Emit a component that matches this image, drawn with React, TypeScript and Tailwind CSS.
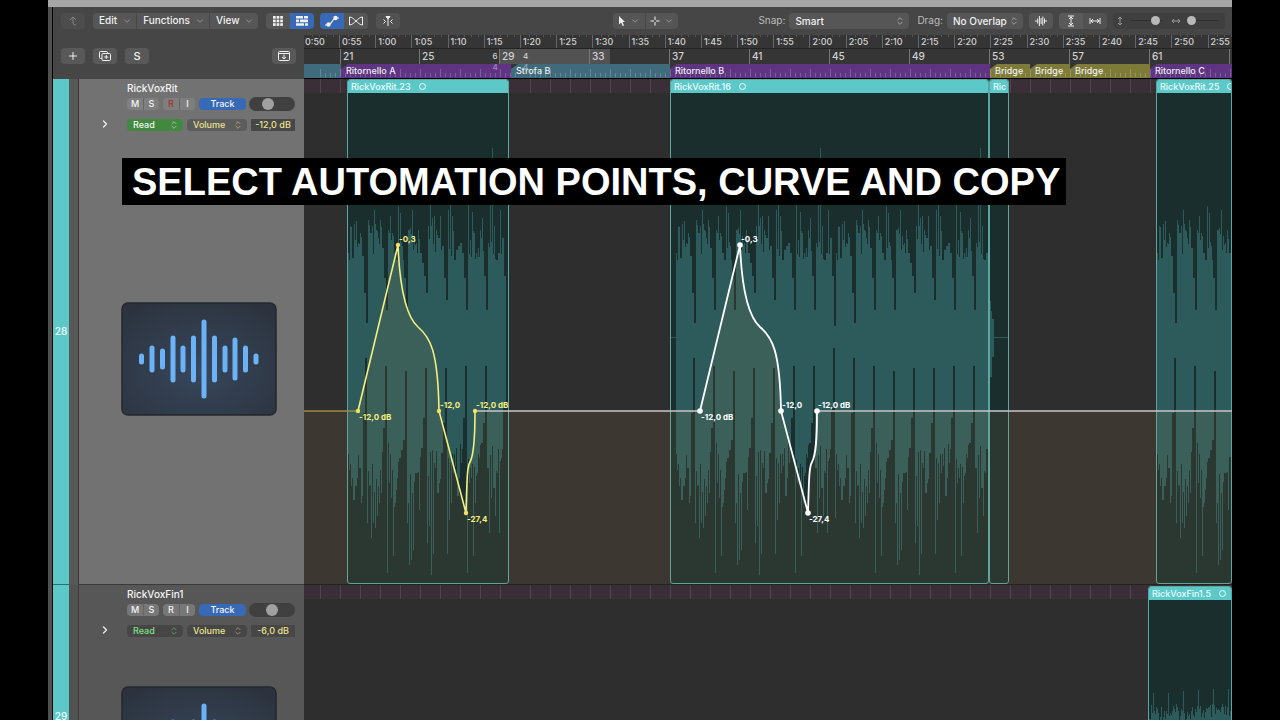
import React from "react";
import { ChevronDown, ChevronRight, ChevronsUpDown, Plus } from "lucide-react";

type Segment = { label: string; size: number };
type Track = {
    number: number;
    name: string;
    selected: boolean;
    pan: number;
    level: string;
}

const LANE_WIDTH = 928;

// share of the visible timeline
function share(size: number) {
    return { width: size / LANE_WIDTH * 100 + "%" };
}

const times: Segment[] = [{ label: "0:50", size: 35 }];
for (let s = 55; s <= 175; s += 5) {
    times.push({ label: Math.floor(s / 60) + ":" + String(s % 60).padStart(2, "0"), size: s == 175 ? 24 : 36.2 });
}

const bars: Segment[] = [
    { label: "", size: 36 },
    { label: "21", size: 79 },
    { label: "25", size: 80 },
    { label: "29", size: 90 },
    { label: "33", size: 80 },
    { label: "37", size: 80 },
    { label: "41", size: 80 },
    { label: "45", size: 80 },
    { label: "49", size: 80 },
    { label: "53", size: 80 },
    { label: "57", size: 80 },
    { label: "61", size: 80 },
    { label: "", size: 3 },
];

const markers = [
    { label: "", size: 37, color: "bg-[#406b7c]" },
    { label: "Ritornello A", size: 170, color: "bg-[#5f3483]" },
    { label: "Strofa B", size: 159, color: "bg-[#406b7c]" },
    { label: "Ritornello B", size: 320, color: "bg-[#5f3483]" },
    { label: "Bridge", size: 40, color: "bg-[#7e7b38]" },
    { label: "Bridge", size: 40, color: "bg-[#7e7b38]" },
    { label: "Bridge", size: 80, color: "bg-[#7e7b38]" },
    { label: "Ritornello C", size: 82, color: "bg-[#5f3483]" },
];

const tracks: Track[] = [
    { number: 28, name: "RickVoxRit", selected: true, pan: 37, level: "-12,0 dB" },
    { number: 29, name: "RickVoxFin1", selected: false, pan: 50, level: "-6,0 dB" },
];

// bar lines, one 6/4 bar sits between 195 and 225
const barLines: number[] = [];
for (let x = 16; x <= 196; x += 20) barLines.push(x);
for (let x = 226; x < LANE_WIDTH; x += 20) barLines.push(x);

// peaks of an 8 bar phrase, ten values per bar, in pixels from the centre line
const upper = [
    85, 112, 80, 114, 117, 95, 105, 82, 45, 15,
    118, 105, 112, 128, 108, 100, 118, 90, 60, 28,
    108, 122, 105, 85, 78, 132, 125, 92, 60, 28,
    108, 110, 128, 102, 95, 108, 85, 75, 62, 45,
    112, 146, 120, 122, 108, 100, 122, 92, 60, 38,
    128, 150, 122, 78, 88, 92, 95, 85, 60, 28,
    138, 98, 126, 105, 85, 90, 108, 120, 62, 28,
    95, 146, 190, 112, 78, 85, 128, 100, 62, 12,
];
const lower = [
    180, 132, 148, 162, 148, 140, 130, 165, 75, 20,
    185, 148, 200, 185, 190, 178, 165, 155, 90, 28,
    235, 145, 160, 218, 165, 140, 120, 112, 102, 33,
    185, 227, 222, 212, 135, 135, 172, 110, 80, 30,
    205, 188, 237, 216, 130, 155, 145, 115, 85, 30,
    216, 182, 165, 135, 128, 158, 140, 125, 80, 28,
    235, 145, 140, 218, 165, 135, 120, 105, 85, 28,
    130, 195, 160, 150, 178, 135, 195, 120, 70, 10,
];

function jitter(n: number) {
    const v = Math.sin(n * 12.9898) * 43758.5453;
    return v - Math.floor(v);
}

function wavePath(start: number, width: number, center: number) {
    let top = "";
    let bottom = "";
    for (let x = start; x < width; x++) {
        const i = x - start;
        const slot = Math.floor(i / 2) % 80;
        let up = upper[slot];
        let down = lower[slot];
        if (i % 2 == 1 && slot % 10 < 8) {
            up = Math.min(up, 78 + jitter(slot) * 36);
            down = Math.min(down, 105 + jitter(slot + 7) * 65);
        }
        top += `V${Math.round(center - up)}H${x + 1}`;
        bottom = `H${x}V${Math.round(center + down)}` + bottom;
    }
    return `M${start} ${center}${top}V${center}${bottom.replace(/^H\d+/, "")}Z`;
}

// second track has a quieter take, only its top edge is in view
function quietPath(width: number) {
    let d = "M0 500V212";
    for (let x = 1; x < width; x++) {
        const y = x % 15 == 4 ? 88 + jitter(x) * 14 : 104 + jitter(x) * 16;
        d += `V${Math.round(y)}H${x + 1}`;
    }
    return d + "V500Z";
}

function Stepper() {
    return <ChevronsUpDown className="pointer-events-none absolute right-1 size-2.5 opacity-60" strokeWidth={2} />;
}

function ToolButton({ label, className = "", children }: { label: string; className?: string; children: React.ReactNode }) {
    return (
        <button aria-label={label} className={"flex h-4 w-6 shrink-0 items-center justify-center " + className}>
            {children}
        </button>
    )
}

function MenuButton({ children }: { children: string }) {
    return (
        <button className="flex h-4 items-center gap-[5px] bg-[#565656] pr-1 pl-1.5 first:rounded-l last:rounded-r">
            {children}
            <ChevronDown className="size-2.5 text-[#a0a0a0]" />
        </button>
    )
}

function Toolbar() {
    return (
        <header className="flex h-7 shrink-0 items-center bg-[#464646] pr-[7px] pb-px pl-2 text-[10px] font-medium text-[#f0f0f0]">
            <ToolButton label="Up" className="rounded bg-[#4d4d4d] text-[#828282]">
                <svg className="size-3" viewBox="0 0 12 12" fill="none" stroke="currentColor" strokeWidth="1">
                    <path d="M3 5l3-3 3 3M6 2v6q0 2 3 2" />
                </svg>
            </ToolButton>
            <nav className="ml-2 flex gap-px">
                <MenuButton>Edit</MenuButton>
                <MenuButton>Functions</MenuButton>
                <MenuButton>View</MenuButton>
            </nav>
            <div className="ml-2 flex">
                <ToolButton label="Grid view" className="rounded-l bg-[#565656]">
                    <svg className="size-2.5" viewBox="0 0 10 10" fill="currentColor">
                        {[0, 3.6, 7.2].map(y => [0, 3.6, 7.2].map(x => <rect key={x + "-" + y} x={x} y={y} width="2.7" height="2.7" />))}
                    </svg>
                </ToolButton>
                <ToolButton label="Track view" className="rounded-r bg-[#3769b6]">
                    <svg className="h-2.5 w-3" viewBox="0 0 12 10" fill="currentColor">
                        <path d="M0 0h7v2.5H0zM8 0h4v2.5H8zM0 3.6h3v2.6H0zM4 3.6h8v2.6H4zM0 7.3h8v2.5H0zM9 7.3h3v2.5H9z" />
                    </svg>
                </ToolButton>
            </div>
            <div className="ml-1.5 flex">
                <ToolButton label="Show automation" className="rounded-l bg-[#3769b6]">
                    <svg className="h-3 w-4" viewBox="0 0 16 12" fill="none" stroke="currentColor" strokeWidth="1.2">
                        <path d="M1 10h3C8 10 8 3 12 3h3" />
                        <circle cx="4.5" cy="9.5" r="1.6" fill="currentColor" />
                        <circle cx="11.5" cy="3" r="1.6" fill="currentColor" />
                    </svg>
                </ToolButton>
                <ToolButton label="Flex" className="rounded-r bg-[#565656]">
                    <svg className="h-2.5 w-4" viewBox="0 0 16 10" fill="none" stroke="currentColor" strokeWidth="1">
                        <path d="M1.500 9V1C6 1 10 9 14.500 9V1C10 1 6 9 1.500 9z" />
                    </svg>
                </ToolButton>
            </div>
            <ToolButton label="Catch playhead" className="ml-2 rounded bg-[#525252]">
                <svg className="size-3" viewBox="0 0 12 12" fill="none" stroke="currentColor" strokeWidth="1">
                    <path d="M4 1.500h4L6 4z" fill="currentColor" />
                    <path d="M6 3v8M1.500 4.500l2 2-2 2M10.500 4.500l-2 2 2 2" />
                </svg>
            </ToolButton>

            <div className="mr-20 ml-auto flex gap-px">
                <button aria-label="Pointer tool" className="flex h-4 w-8 items-center justify-center gap-1 rounded-l bg-[#555]">
                    <svg className="h-3 w-2" viewBox="0 0 8 12" fill="currentColor">
                        <path d="M1 1l6 6H4.600l1.400 3.400-1.400.6L3.200 7.600 1 9.500z" />
                    </svg>
                    <ChevronDown className="size-2.5 text-[#a0a0a0]" />
                </button>
                <button aria-label="Marquee tool" className="flex h-4 w-8 items-center justify-center gap-1 rounded-r bg-[#555]">
                    <svg className="size-2.5" viewBox="0 0 10 10" stroke="currentColor">
                        <path d="M5 .500v3.500M5 6v3.500M.500 5H4M6 5h3.500" />
                    </svg>
                    <ChevronDown className="size-2.5 text-[#a0a0a0]" />
                </button>
            </div>

            <label htmlFor="snap" className="mr-1 font-normal text-[#bdbdbd]">Snap:</label>
            <div className="relative flex items-center">
                <select id="snap" className="h-4 w-[120px] appearance-none rounded bg-[#565656] px-1.5 leading-4"><option>Smart</option></select>
                <Stepper />
            </div>
            <label htmlFor="drag" className="mr-1 ml-2 font-normal text-[#bdbdbd]">Drag:</label>
            <div className="relative flex items-center">
                <select id="drag" className="h-4 w-[76px] appearance-none rounded bg-[#565656] px-1.5 leading-4"><option>No Overlap</option></select>
                <Stepper />
            </div>
            <ToolButton label="Waveform zoom" className="ml-1.5 rounded bg-[#565656]">
                <svg className="size-3" viewBox="0 0 12 12" stroke="currentColor" strokeWidth="1">
                    <path d="M1 5v2M2.700 3.500v5M4.400 1v10M6.100 3v6M7.800 1.500v9M9.500 3.500v5M11 5v2" />
                </svg>
            </ToolButton>
            <div className="ml-1.5 flex">
                <ToolButton label="Vertical auto zoom" className="rounded-l bg-[#5a5a5a]">
                    <svg className="size-3" viewBox="0 0 12 12" fill="none" stroke="currentColor" strokeWidth="1">
                        <path d="M3 1h6M3 11h6M6 1.500v9M4 4l2-2 2 2M4 8l2 2 2-2" />
                    </svg>
                </ToolButton>
                <ToolButton label="Horizontal auto zoom" className="rounded-r bg-[#525252]">
                    <svg className="size-3" viewBox="0 0 12 12" fill="none" stroke="currentColor" strokeWidth="1">
                        <path d="M1 3v6M11 3v6M1.500 6h9M4 4L2 6l2 2M8 4l2 2-2 2" />
                    </svg>
                </ToolButton>
            </div>
            <div className="ml-1.5 flex h-4 items-center gap-2 rounded bg-[#3f3f3f] pr-1.5 pl-0.5 text-[#999]">
                <ZoomSlider label="Vertical zoom" value={88}>
                    <path d="M5 1v8M3 3l2-2 2 2M3 7l2 2 2-2" />
                </ZoomSlider>
                <ZoomSlider label="Horizontal zoom" value={0}>
                    <path d="M1 5h8M3 3L1 5l2 2M7 3l2 2-2 2" />
                </ZoomSlider>
            </div>
        </header>
    )
}

function ZoomSlider({ label, value, children }: { label: string; value: number; children: React.ReactNode }) {
    return (
        <label className="flex items-center gap-1.5">
            <svg className="size-2.5" viewBox="0 0 10 10" fill="none" stroke="currentColor">{children}</svg>
            <input
                type="range" aria-label={label} defaultValue={value}
                className="h-px w-8 appearance-none bg-[#2e2e2e] [&::-webkit-slider-thumb]:size-[9px] [&::-webkit-slider-thumb]:appearance-none [&::-webkit-slider-thumb]:rounded-full [&::-webkit-slider-thumb]:bg-[#b8b8b8]"
            />
        </label>
    )
}

function Rulers() {
    return (
        <div className="relative min-w-0 flex-1 overflow-hidden bg-[#353535] text-[9px] text-[#d2d2d2]">
            <div className="flex h-3.5 border-b border-[#232323] leading-[13px] font-medium">
                {times.map((time, index) => (
                    <div key={time.label} style={share(time.size)}
                         className={"relative shrink-0 whitespace-nowrap " + (index > 0 ? "border-l border-[#666] pl-0.5" : "pl-px")}>
                        {time.label}
                        <span className="absolute top-0 left-2 flex gap-[6px]">
                            {[1, 2, 3, 4].map(n => <i key={n} className="h-0.5 w-px bg-[#555]" />)}
                        </span>
                    </div>
                ))}
            </div>
            <div className="relative flex h-[15px] text-[10px] leading-[14px] font-medium">
                <div className="absolute inset-y-0 left-[21%] w-[12%] bg-[#525252]" />
                {bars.map((bar, index) => (
                    <div key={index} style={share(bar.size)}
                         className={"relative shrink-0 " + (index > 0 ? "border-l border-[#777]" : "") + (bar.label && " pl-0.5")}>
                        {bar.label}
                    </div>
                ))}
            </div>
            <div className="relative flex h-3.5 leading-[14px] font-medium text-[#eee]">
                {markers.map((marker, index) => (
                    <div key={index} style={share(marker.size)}
                         className={"shrink-0 overflow-hidden whitespace-nowrap " + marker.color + (index > 0 ? " pl-[5px] [clip-path:polygon(7px_0,100%_0,100%_100%,0_100%,0_5px)]" : "")}>
                        {marker.label}
                    </div>
                ))}
                <svg className="absolute inset-0 h-full w-full" viewBox={`0 0 ${LANE_WIDTH} 14`} preserveAspectRatio="none" stroke="#fff" shapeRendering="crispEdges">
                    <path strokeOpacity=".2" d={barLines.map(x => `M${x}.5 5V13M${x + 5}.5 9V13M${x + 10}.5 9V13M${x + 15}.5 9V13`).join("")} />
                </svg>
            </div>
            <div className="h-px bg-black" />
            <div className="absolute top-4 left-[20.3%] text-[8px] leading-[11px] font-medium">6<br /><span className="text-[#a888bd]">4</span></div>
            <div className="absolute top-4 left-[23.6%] text-[8px] leading-[11px] font-medium">4<br /><span className="text-[#8fb0bd]">4</span></div>
        </div>
    )
}

const smallButton = "h-3 w-4 bg-[#858585]/70 text-center text-[9px] leading-3";

function TrackHeader({ track }: { track: Track }) {
    const shade = track.selected ? "bg-[#5c5c5c]" : "bg-[#464646]";
    return (
        <div className={"flex flex-1 flex-col border-b border-l border-[#3a3a3a] " + (track.selected ? "bg-[#727272]" : "bg-[#575757]")}>
            <div className="flex pt-[3px] pr-[9px] text-[#f4f4f4]">
                <button aria-label={"Show details of " + track.name} className="mt-9 ml-5 size-3 self-start">
                    <ChevronRight className="size-3" strokeWidth={2.5} />
                </button>
                <div className="ml-4 flex-1">
                    <div className="text-[10px] leading-3 font-medium">{track.name}</div>
                    <div className="mt-[3px] flex items-center font-medium">
                        <button className={smallButton + " rounded-l-sm"}>M</button>
                        <button className={smallButton + " rounded-r-sm border-l border-[#666]"}>S</button>
                        <button className={smallButton + " ml-1 rounded-l-sm " + (track.selected ? "text-[#a2332c]" : "")}>R</button>
                        <button className={smallButton + " rounded-r-sm border-l border-[#666]"}>I</button>
                        <button className="ml-1 h-3 w-[47px] rounded-sm bg-[#3769b6] text-[9px] leading-3">Track</button>
                        <input
                            type="range" aria-label={"Pan of " + track.name} defaultValue={track.pan}
                            className="ml-[3px] h-3.5 w-[46px] appearance-none rounded-full bg-[#404040] [&::-webkit-slider-thumb]:size-3 [&::-webkit-slider-thumb]:appearance-none [&::-webkit-slider-thumb]:rounded-full [&::-webkit-slider-thumb]:bg-[#a0a0a0]"
                        />
                    </div>
                    <div className="mt-2 flex gap-1 text-[9px] font-medium text-[#ebe28a]">
                        <div className={"relative flex items-center " + (track.selected ? "text-[#f4f4f4]" : "text-[#7fe287]")}>
                            <select aria-label={"Automation mode of " + track.name}
                                    className={"h-3 w-14 appearance-none rounded-sm px-1.5 leading-3 " + (track.selected ? "bg-[#40893f]" : shade)}>
                                <option>Read</option>
                            </select>
                            <Stepper />
                        </div>
                        <div className="relative flex items-center">
                            <select aria-label={"Automation parameter of " + track.name} className={"h-3 w-[60px] appearance-none rounded-sm px-1.5 leading-3 " + shade}>
                                <option>Volume</option>
                            </select>
                            <Stepper />
                        </div>
                        <input aria-label={"Level of " + track.name} defaultValue={track.level} className="h-3 w-11 bg-[#474747] text-center leading-3" />
                    </div>
                </div>
            </div>
            <div className="flex flex-1 items-center pt-0.5 pl-[42px]">
                <svg className="h-[114px] w-[156px]" viewBox="0 0 156 114">
                    <defs>
                        <radialGradient id={"tile" + track.number} cy=".6" r=".7">
                            <stop offset="0" stopColor="#37475d" />
                            <stop offset="1" stopColor="#2c333e" />
                        </radialGradient>
                    </defs>
                    <rect x="1" y="1" width="154" height="112" rx="6" fill={`url(#tile${track.number})`} stroke="#24272c" strokeWidth="1.5" />
                    <path stroke="#6bb2f7" strokeWidth="5" strokeLinecap="round"
                          d="M20.500 54v6M31 46v22M41.500 49v16M52 36v42M62 46v22M72.500 36v42M83 20v74M93.500 36v42M104 46v22M114 38v38M124.500 46v22M135 54v6" />
                </svg>
            </div>
        </div>
    )
}

function Clip({ name, size, children }: { name: string; size: number; children?: React.ReactNode }) {
    return (
        <section style={share(size)} className="flex shrink-0 flex-col overflow-hidden rounded-[3px] border border-[#5ba5a3] bg-[#1a2e2e]">
            <h3 className="flex h-[13px] shrink-0 items-center gap-2 overflow-hidden bg-[#5cc8c8] pl-[3px] text-[9px] font-medium whitespace-nowrap text-[#ecffff]">
                {name}
                {size > 20 && <i className="size-[7px] shrink-0 rounded-full border border-[#ecffff]" />}
            </h3>
            <svg className="min-h-0 w-full flex-1" viewBox={`0 0 ${size - 2} 490`} preserveAspectRatio="none" fill="#2d5b5b" shapeRendering="crispEdges">
                {children}
            </svg>
        </section>
    )
}

function Gap({ size }: { size: number }) {
    return <div className="shrink-0" style={share(size)} />;
}

function LaneTop() {
    return (
        <svg className="absolute inset-x-0 top-0 h-3.5 w-full bg-[#3a2e37]" viewBox={`0 0 ${LANE_WIDTH} 14`} preserveAspectRatio="none" stroke="#50444d" shapeRendering="crispEdges">
            <path d={barLines.map(x => `M${x}.5 0V14`).join("")} />
        </svg>
    )
}

// both automation passes have the same shape, the pasted one is shifted to the right
const shapeAt = (x: number) =>
    `L${x} 332L${x + 40} 166C${x + 42} 216 ${x + 50} 239 ${x + 60} 248C${x + 72} 258 ${x + 80} 271 ${x + 81} 332` +
    `L${x + 108} 434C${x + 109} 401 ${x + 109} 388 ${x + 112} 383C${x + 116} 376 ${x + 117} 361 ${x + 117} 332`;

const pointsAt = (x: number) => [[x, 332], [x + 40, 166], [x + 81, 332], [x + 108, 434], [x + 117, 332]];

function Automation() {
    const labels = [
        { text: "-12,0 dB", x: 1, y: 332 },
        { text: "-0,3", x: 41, y: 154 },
        { text: "-12,0", x: 82, y: 320 },
        { text: "-27,4", x: 109, y: 434 },
        { text: "-12,0 dB", x: 118, y: 320 },
    ];
    return (
        <div className="pointer-events-none absolute inset-0">
            <svg className="h-full w-full" viewBox={`0 0 ${LANE_WIDTH} 505`} preserveAspectRatio="none" fill="none">
                <path fill="#ba924c" fillOpacity=".1" d={`M0 505V332${shapeAt(54)}${shapeAt(396)}L${LANE_WIDTH} 332V505Z`} />
                <path stroke="#a08a45" strokeWidth="1.500" d="M0 332H54" />
                <path stroke="#c9c5c9" strokeWidth="1.500" d={`M171 332H396M513 332H${LANE_WIDTH}`} />
                <path stroke="#f5ee80" strokeWidth="1.600" d={"M54 332" + shapeAt(54)} />
                <path stroke="#fff" strokeWidth="1.800" d={"M396 332" + shapeAt(396)} />
                {pointsAt(54).map(([x, y]) => <circle key={x} cx={x} cy={y} r="2.200" fill="#f5e060" />)}
                {pointsAt(396).map(([x, y]) => <circle key={x} cx={x} cy={y} r="2.800" fill="#fff" />)}
            </svg>
            {[54, 396].map(start => labels.map((label, index) => (
                <span key={start + "-" + index}
                      className={"absolute text-[8px] leading-3 font-bold whitespace-nowrap " + (start == 54 ? "text-[#f5ee80]" : "text-white")}
                      style={{ left: (start + label.x) / LANE_WIDTH * 100 + "%", top: label.y }}>
                    {label.text}
                </span>
            )))}
        </div>
    )
}

function TrackRow({ track, className, children }: { track: Track; className: string; children: React.ReactNode }) {
    return (
        <div className={"flex shrink-0 " + className}>
            <div className="flex w-4 items-center justify-center border-b border-[#2f6e6e] bg-[#5cc8c8] text-[10px] font-medium text-[#f0ffff]">{track.number}</div>
            <div className={"w-[9px] " + (track.selected ? "bg-[#585858]" : "bg-[#525252]")} />
            <div className="flex w-[226px] shrink-0">
                <TrackHeader track={track} />
            </div>
            <div className="relative min-w-0 flex-1 overflow-hidden border-b border-[#222] bg-[#2e2e2e]">
                <LaneTop />
                {children}
            </div>
        </div>
    )
}

export default function App() {
    return (
        <main className="h-screen overflow-hidden bg-black px-12 font-['Inter',sans-serif]">
            <div className="flex h-full flex-col overflow-hidden">
                <div className="h-[7px] shrink-0 bg-[#a6a6a6]" />
                <div className="flex min-h-0 flex-1">
                    <div className="w-[5px] shrink-0 border-r border-black bg-[#505050]" />
                    <div className="flex min-w-0 flex-1 flex-col">
                        <Toolbar />
                        <div className="flex shrink-0">
                            <div className="flex w-[251px] shrink-0 items-center gap-2 bg-[#464646] pr-2 pb-0.5 pl-2 text-[#f0f0f0]">
                                <ToolButton label="Add track" className="rounded bg-[#595959]"><Plus className="size-3" /></ToolButton>
                                <ToolButton label="Duplicate track" className="rounded bg-[#595959]">
                                    <svg className="size-3" viewBox="0 0 12 12" fill="none" stroke="currentColor" strokeWidth="1">
                                        <path d="M3 8.500H1.500a1 1 0 0 1-1-1v-5a1 1 0 0 1 1-1h6a1 1 0 0 1 1 1V3.500" />
                                        <rect x="3" y="3.500" width="8.500" height="7" rx="1" />
                                        <path d="M7.250 5v4M5.250 7h4" />
                                    </svg>
                                </ToolButton>
                                <ToolButton label="Solo" className="rounded bg-[#595959] text-[11px] font-medium">S</ToolButton>
                                <ToolButton label="Global tracks" className="ml-auto rounded bg-[#595959]">
                                    <svg className="size-3" viewBox="0 0 12 12" fill="none" stroke="currentColor" strokeWidth="1">
                                        <rect x=".500" y="1.500" width="11" height="9" rx="1" />
                                        <path d="M.500 3.500h11M6 4.500v4.500M4 7l2 2 2-2" />
                                    </svg>
                                </ToolButton>
                            </div>
                            <Rulers />
                        </div>
                        <TrackRow track={tracks[0]} className="h-[506px]">
                            <div className="relative flex h-[505px]">
                                <Gap size={43} />
                                <Clip name="RickVoxRit.23" size={162} >
                                    <path d={wavePath(0, 158, 245)} />
                                </Clip>
                                <Gap size={161} />
                                <Clip name="RickVoxRit.16" size={319}>
                                    <path d={wavePath(5, 317, 245)} />
                                    <path d="M0 244h5v1H0z" />
                                </Clip>
                                <Clip name="Ric" size={20}>
                                    <path d="M0 208h1v10h1v8h2v38H2v20H0zM4 244h14v1H4z" />
                                </Clip>
                                <Gap size={147} />
                                <Clip name="RickVoxRit.25" size={76}>
                                    <path d={wavePath(0, 74, 245)} />
                                </Clip>
                            </div>
                            <Automation />
                        </TrackRow>
                        <TrackRow track={tracks[1]} className="h-[263px]">
                            <div className="relative flex h-[506px] pt-px">
                                <Gap size={844} />
                                <Clip name="RickVoxFin1.5" size={84}>
                                    <path d={quietPath(82)} />
                                </Clip>
                            </div>
                        </TrackRow>
                    </div>
                </div>
            </div>
            <h1 className="absolute top-[158px] left-[122px] bg-black pt-px pr-1.5 pl-[10px] font-['Liberation_Sans',sans-serif] text-[38px] leading-[46px] font-bold whitespace-nowrap text-white">
                SELECT AUTOMATION POINTS, CURVE AND COPY
            </h1>
        </main>
    )
}
